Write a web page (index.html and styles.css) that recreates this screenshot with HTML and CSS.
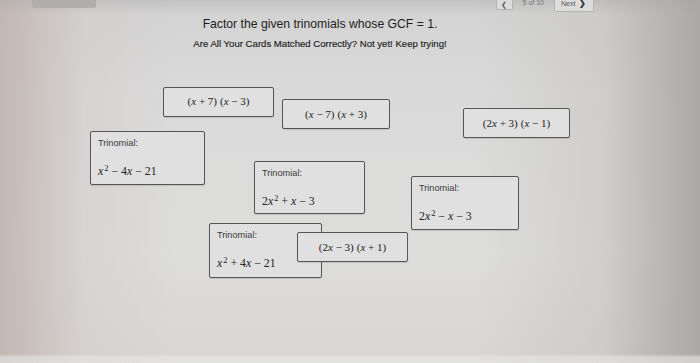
FILE: index.html
```html
<!DOCTYPE html>
<html>
<head>
<meta charset="utf-8">
<link rel="stylesheet" href="styles.css">
</head>
<body>
<div class="screen">
  <div class="topbar">
    <div class="tab"></div>
    <div class="pager">
      <span class="btn prev">&#10094;</span>
      <span class="count">5 of 10</span>
      <span class="btn next">Next <b>&#10095;</b></span>
    </div>
  </div>
  <header class="head">
    <h1 class="title">Factor the given trinomials whose GCF = 1.</h1>
    <p class="status">Are All Your Cards Matched Correctly? Not yet! Keep trying!</p>
  </header>
  <div class="board">
    <div class="card ans a1"><span class="m">(<i>x</i> + 7)<span class="g"></span>(<i>x</i> − 3)</span></div>
    <div class="card ans a2"><span class="m">(<i>x</i> − 7)<span class="g"></span>(<i>x</i> + 3)</span></div>
    <div class="card ans a3"><span class="m">(2<i>x</i> + 3)<span class="g"></span>(<i>x</i> − 1)</span></div>
    <div class="card tri t1"><span class="lbl">Trinomial:</span><span class="m"><i>x</i><sup>2</sup> − 4<i>x</i> − 21</span></div>
    <div class="card tri t2"><span class="lbl">Trinomial:</span><span class="m">2<i>x</i><sup>2</sup> + <i>x</i> − 3</span></div>
    <div class="card tri t3"><span class="lbl">Trinomial:</span><span class="m">2<i>x</i><sup>2</sup> − <i>x</i> − 3</span></div>
    <div class="card tri t4"><span class="lbl">Trinomial:</span><span class="m"><i>x</i><sup>2</sup> + 4<i>x</i> − 21</span></div>
    <div class="card ans a4"><span class="m">(2<i>x</i> − 3)<span class="g"></span>(<i>x</i> + 1)</span></div>
  </div>
</div>
</body>
</html>
```
FILE: styles.css
```css
html, body {
  margin: 0;
  padding: 0;
}
body {
  width: 700px;
  height: 363px;
  overflow: hidden;
  font-family: "Liberation Sans", Arial, sans-serif;
}
.screen {
  width: 700px;
  height: 363px;
  position: relative;
  background:
    linear-gradient(180deg, rgba(255,255,255,0) 0%, rgba(255,255,255,0) 97.5%, rgba(232,232,232,0.6) 98.5%, rgba(232,232,232,0.6) 100%),
    linear-gradient(90deg, rgba(192,180,176,0.9) 0%, rgba(210,204,202,0.5) 12%, rgba(222,222,222,0) 25%, rgba(222,222,222,0) 68%, rgba(196,194,190,0.5) 86%, rgba(168,166,162,0.95) 100%),
    linear-gradient(180deg, #d2d2d2 0%, #dadada 25%, #dddddc 70%, #d8d6d4 100%);
  color: #222;
}
.topbar {
  height: 14px;
  display: flex;
  justify-content: space-between;
  align-items: flex-start;
  background: linear-gradient(180deg, rgba(165,165,165,0.35), rgba(165,165,165,0));
}
.tab {
  width: 64px;
  height: 8px;
  margin-left: 32px;
  background: #b0aeac;
  border-radius: 0 0 2px 2px;
}
.pager {
  display: flex;
  align-items: flex-start;
  gap: 8px;
  margin-right: 106px;
  font-size: 7px;
  color: #777;
}
.btn {
  border: 1px solid #b4b4b4;
  border-top: none;
  background: #dcdcdc;
  border-radius: 0 0 2px 2px;
  color: #555;
}
.prev {
  width: 15px;
  height: 9px;
  font-size: 7px;
  line-height: 9px;
  text-align: center;
}
.count {
  line-height: 8px;
  margin-top: -1px;
  padding: 0 2px;
}
.next {
  width: 40px;
  height: 12px;
  line-height: 8px;
  padding-left: 6px;
  box-sizing: border-box;
  font-size: 7px;
}
.next b {
  font-size: 8px;
  color: #333;
  margin-left: 2px;
}
.head {
  text-align: center;
  margin-left: -60px;
}
.title {
  margin: 3px 0 0;
  font-size: 12.2px;
  font-weight: normal;
  color: #1e1e1e;
}
.status {
  margin: 7px 0 0;
  font-size: 9.6px;
  color: #222;
  -webkit-text-stroke: 0.15px #222;
}
.board {
  position: relative;
  margin-top: 12px;
}
.card {
  position: absolute;
  box-sizing: border-box;
  border: 1.3px solid #555;
  border-radius: 2px;
  background: #e0e0e0;
  box-shadow: 0 1px 1px rgba(0,0,0,0.12);
}
.m {
  font-family: "Liberation Serif", "Times New Roman", serif;
  font-size: 11px;
  color: #222;
  white-space: nowrap;
}
.m i {
  font-style: italic;
}
.m .g {
  display: inline-block;
  width: 3px;
}
.m sup {
  font-size: 8.5px;
  vertical-align: 4px;
  line-height: 0;
  margin-left: 1px;
}
.ans {
  height: 30px;
  display: flex;
  align-items: center;
  justify-content: center;
}
.tri {
  display: flex;
  flex-direction: column;
  padding: 6px 0 0 7px;
}
.lbl {
  font-size: 9.2px;
  color: #3a3a3a;
}
.tri .m {
  margin-top: 16px;
  font-size: 11.8px;
}
.a1 { left: 163px; top: 26px; width: 111px; padding-bottom: 2px; }
.a2 { left: 282px; top: 38px; width: 108px; }
.a3 { left: 463px; top: 47px; width: 107px; }
.a4 { left: 297px; top: 171px; width: 111px; z-index: 2; }
.t1 { left: 90px; top: 70px; width: 115px; height: 54px; }
.t2 { left: 254px; top: 100px; width: 111px; height: 53px; }
.t3 { left: 411px; top: 115px; width: 108px; height: 54px; }
.t4 { left: 209px; top: 162px; width: 113px; height: 55px; }
```
